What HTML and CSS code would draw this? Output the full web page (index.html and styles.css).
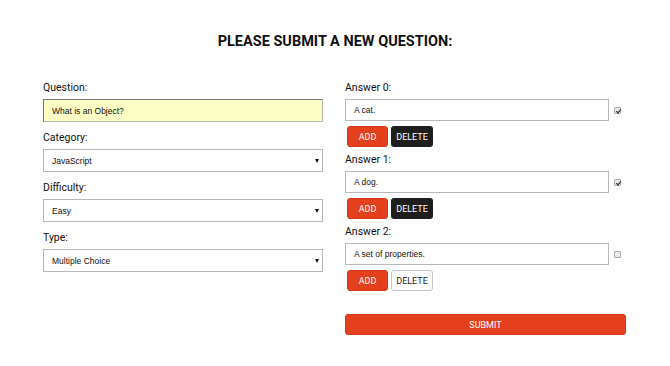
FILE: index.html
```html
<!DOCTYPE html>
<html lang="en">

<head>
    <meta charset="UTF-8">
    <title>New Question</title>
    <link rel="stylesheet" href="styles.css">
</head>

<body>
    <h1 class="title">PLEASE SUBMIT A NEW QUESTION:</h1>
    <div class="container">
        <div class="col">
            <div class="field">
                <label for="question">Question:</label>
                <input type="text" id="question" class="text-input question-input" value="What is an Object?">
            </div>
            <div class="field">
                <label for="category">Category:</label>
                <div class="select-wrap">
                    <select id="category">
                        <option>JavaScript</option>
                    </select>
                </div>
            </div>
            <div class="field">
                <label for="difficulty">Difficulty:</label>
                <div class="select-wrap">
                    <select id="difficulty">
                        <option>Easy</option>
                    </select>
                </div>
            </div>
            <div class="field">
                <label for="type">Type:</label>
                <div class="select-wrap">
                    <select id="type">
                        <option>Multiple Choice</option>
                    </select>
                </div>
            </div>
        </div>
        <div class="col">
            <div class="answer">
                <label for="answer-0">Answer 0:</label>
                <div class="answer-row">
                    <input type="text" id="answer-0" class="text-input" value="A cat.">
                    <input type="checkbox" class="check" checked>
                </div>
                <div class="buttons">
                    <button class="btn btn-add">ADD</button>
                    <button class="btn btn-delete">DELETE</button>
                </div>
            </div>
            <div class="answer">
                <label for="answer-1">Answer 1:</label>
                <div class="answer-row">
                    <input type="text" id="answer-1" class="text-input" value="A dog.">
                    <input type="checkbox" class="check" checked>
                </div>
                <div class="buttons">
                    <button class="btn btn-add">ADD</button>
                    <button class="btn btn-delete">DELETE</button>
                </div>
            </div>
            <div class="answer">
                <label for="answer-2">Answer 2:</label>
                <div class="answer-row">
                    <input type="text" id="answer-2" class="text-input" value="A set of properties.">
                    <input type="checkbox" class="check">
                </div>
                <div class="buttons">
                    <button class="btn btn-add">ADD</button>
                    <button class="btn btn-delete light">DELETE</button>
                </div>
            </div>
            <button class="btn btn-submit">SUBMIT</button>
        </div>
    </div>
</body>

</html>
```

FILE: styles.css
```css
body {
    font-family: Roboto, "Liberation Sans", sans-serif;
    background-color: #fff;
    color: #111;
    margin: 0;
}

.title {
    font-size: 14.5px;
    line-height: 18px;
    font-weight: bold;
    text-align: center;
    margin: 33px 0 0;
}

.container {
    display: flex;
    justify-content: center;
    gap: 22px;
    margin-top: 30px;
    padding-right: 1px;
}

.col {
    display: flex;
    flex-direction: column;
}

.col:first-child {
    width: 280px;
}

.col:last-child {
    width: 281px;
}

label {
    display: block;
    font-size: 10.5px;
    line-height: 14px;
    margin-bottom: 4px;
}

.field {
    margin-bottom: 9px;
}

.text-input,
select {
    display: block;
    width: 100%;
    height: 23px;
    box-sizing: border-box;
    border: 1px solid #b8b8b8;
    background: #fff;
    font-family: "Liberation Sans", Arial, sans-serif;
    font-size: 8.5px;
    color: #111;
    padding: 0 8px;
    outline: none;
    border-radius: 0;
}

.question-input {
    background: #fbfdc4;
    border-top-color: #777;
    border-left-color: #777;
}

.select-wrap {
    position: relative;
}

.select-wrap select {
    appearance: none;
    -webkit-appearance: none;
}

.select-wrap::after {
    content: "";
    position: absolute;
    right: 4px;
    top: 10px;
    border-left: 2.5px solid transparent;
    border-right: 2.5px solid transparent;
    border-top: 4px solid #111;
}

.answer {
    margin-bottom: 6px;
}

.answer-row {
    display: flex;
    align-items: center;
}

.answer-row .text-input {
    width: 264px;
    height: 22px;
    flex: none;
}

.check {
    appearance: none;
    -webkit-appearance: none;
    position: relative;
    width: 7px;
    height: 7px;
    margin: 0 0 0 5px;
    border: 1px solid #a8a8a8;
    border-radius: 1px;
    background: #ececec;
}

.check:checked::after {
    content: "";
    position: absolute;
    left: 1.5px;
    top: 0;
    width: 2px;
    height: 4px;
    border-right: 1.3px solid #222;
    border-bottom: 1.3px solid #222;
    transform: rotate(40deg);
}

.buttons {
    display: flex;
    gap: 3px;
    margin: 5px 0 0 2px;
}

.btn {
    height: 21px;
    border: 1px solid transparent;
    border-radius: 3px;
    font-family: Roboto, "Liberation Sans", sans-serif;
    font-size: 9px;
    font-weight: normal;
    color: #fff;
    padding: 0;
    cursor: pointer;
}

.btn-add {
    width: 41px;
    background: #e5401d;
    border-color: #d33818;
}

.btn-delete {
    width: 42px;
    background: #1e1e1e;
}

.btn-delete.light {
    background: #fff;
    color: #222;
    border-color: #c4c4c4;
}

.btn-submit {
    width: 281px;
    margin-top: 17px;
    background: #e5401d;
    border-color: #d33818;
}
```
